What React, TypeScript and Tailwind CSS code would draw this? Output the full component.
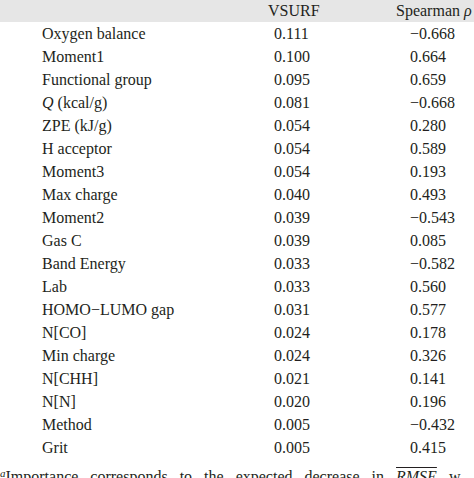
const rows: [React.ReactNode, string, string][] = [
  ["Oxygen balance", "0.111", "−0.668"],
  ["Moment1", "0.100", "0.664"],
  ["Functional group", "0.095", "0.659"],
  [
    <>
      <span className="italic">Q</span> (kcal/g)
    </>,
    "0.081",
    "−0.668",
  ],
  ["ZPE (kJ/g)", "0.054", "0.280"],
  ["H acceptor", "0.054", "0.589"],
  ["Moment3", "0.054", "0.193"],
  ["Max charge", "0.040", "0.493"],
  ["Moment2", "0.039", "−0.543"],
  ["Gas C", "0.039", "0.085"],
  ["Band Energy", "0.033", "−0.582"],
  ["Lab", "0.033", "0.560"],
  ["HOMO−LUMO gap", "0.031", "0.577"],
  ["N[CO]", "0.024", "0.178"],
  ["Min charge", "0.024", "0.326"],
  ["N[CHH]", "0.021", "0.141"],
  ["N[N]", "0.020", "0.196"],
  ["Method", "0.005", "−0.432"],
  ["Grit", "0.005", "0.415"],
];

export default function App() {
  return (
    <div className="w-[474px] h-[478px] overflow-hidden bg-white text-[#231f20] font-['Liberation_Serif',serif] text-[16px] leading-none">
      {/* header band */}
      <div className="h-[22px] bg-[#e6e6e6] flex items-center whitespace-nowrap">
        <div className="w-[268px]" />
        <div className="w-[128px]">VSURF</div>
        <div>
          Spearman <span className="italic">ρ</span>
        </div>
      </div>

      <div>
        {rows.map(([label, vsurf, rho], i) => (
          <div key={i} className="h-[23.05px] flex items-center whitespace-nowrap">
            <div className="w-[274px] pl-[42px]">{label}</div>
            <div className="w-[136px]">{vsurf}</div>
            <div>{rho}</div>
          </div>
        ))}
      </div>

      {/* footnote, cut off by the frame */}
      <div className="mt-[9px] whitespace-nowrap [word-spacing:8px]">
        <span className="relative -top-[5px] italic text-[11px]">a</span>Importance corresponds to the expected decrease in{" "}
        <span className="italic overline">RMSE</span> w
      </div>
    </div>
  );
}
